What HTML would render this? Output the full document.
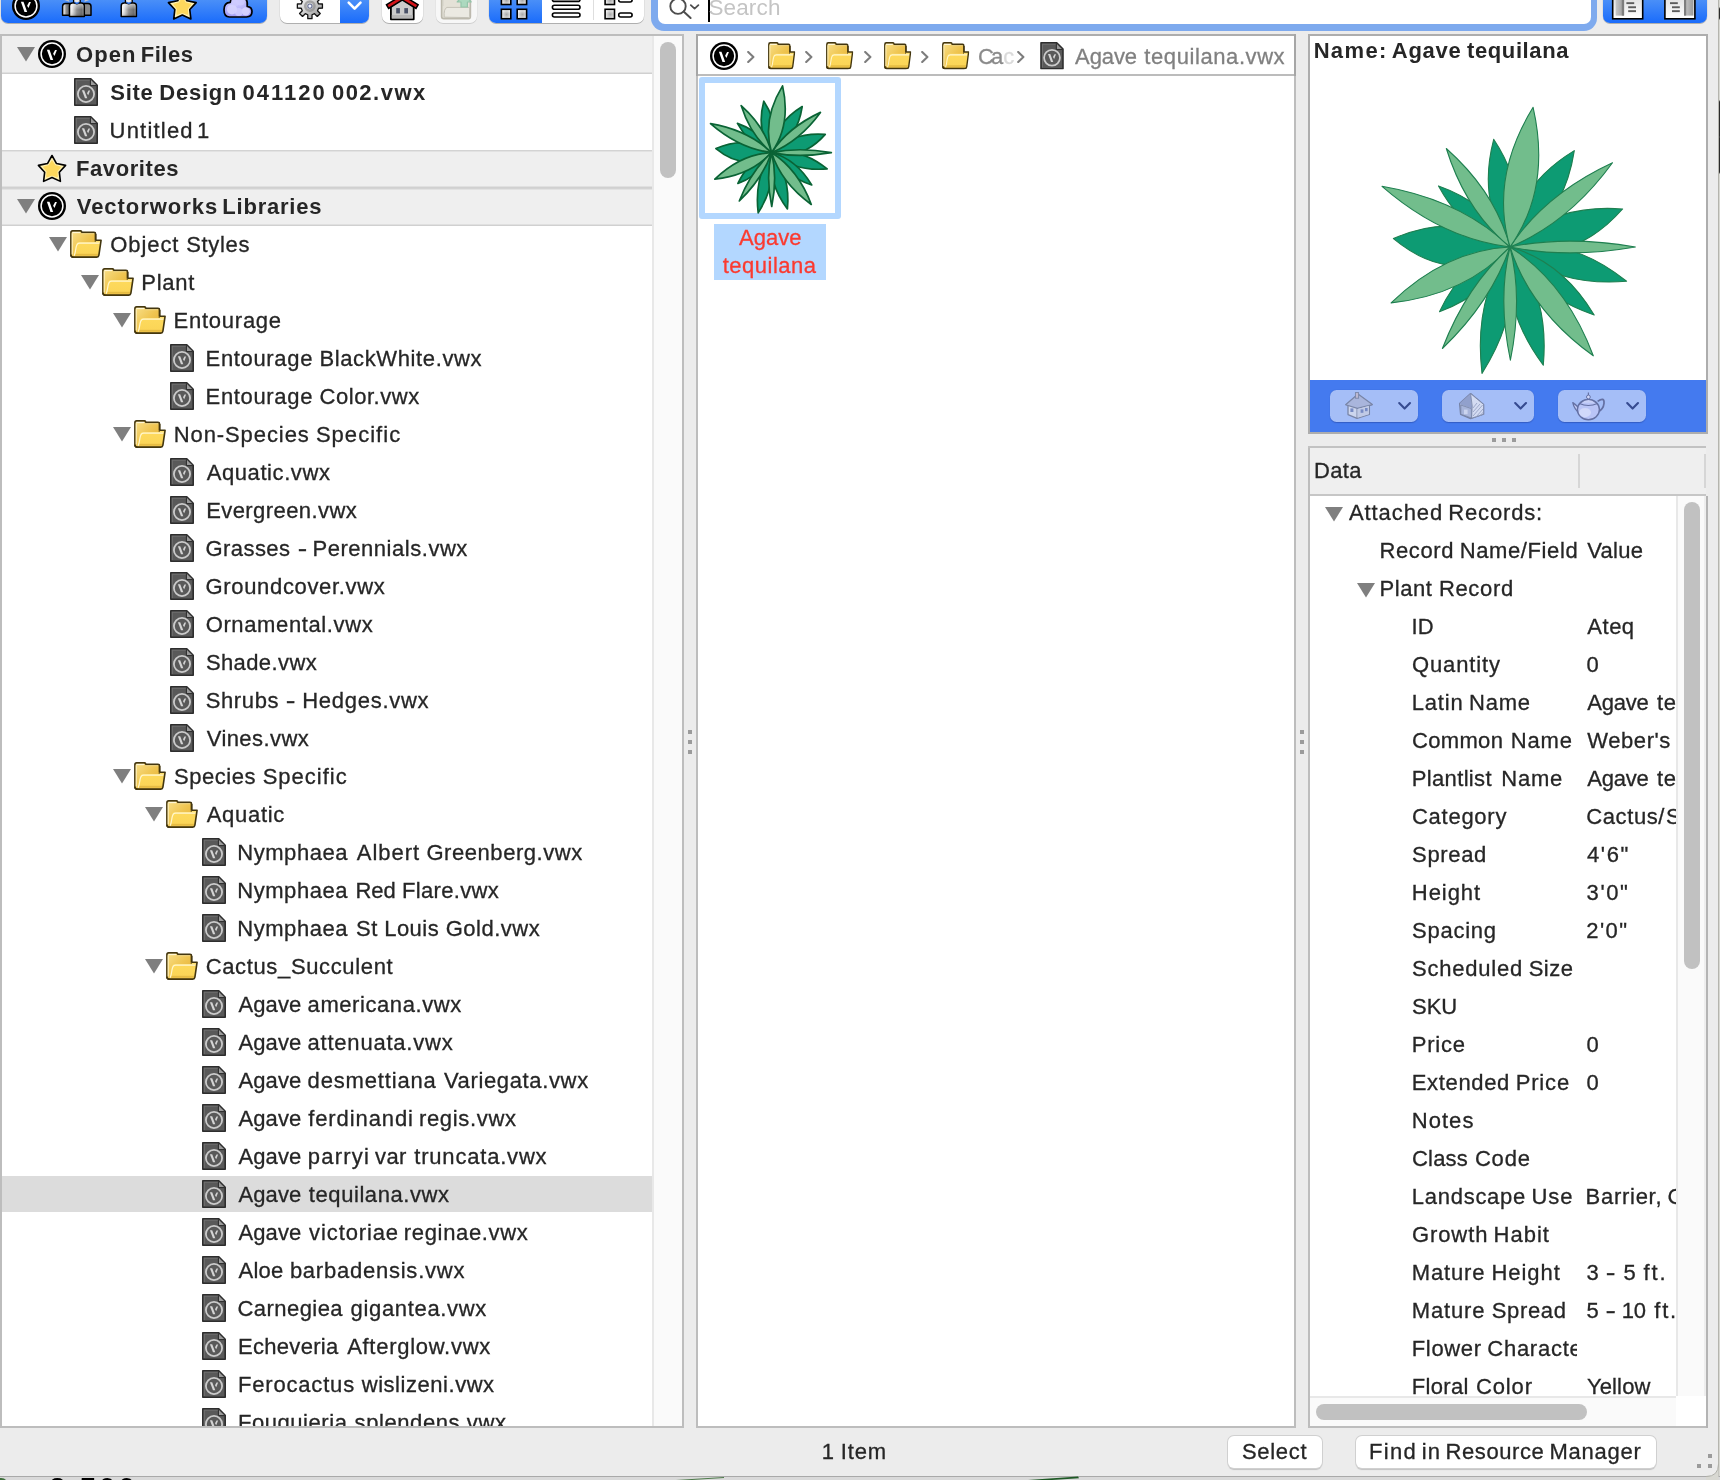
<!DOCTYPE html><html><head><meta charset="utf-8"><title>Resource Selector</title><style>
*{box-sizing:border-box;margin:0;padding:0}
html,body{width:1720px;height:1480px;overflow:hidden;background:#ececec}
body{position:relative;font-family:"Liberation Sans",sans-serif;font-size:22px;color:#262626}
.abs{position:absolute}
.t{position:absolute;white-space:pre;line-height:38px;height:38px;font-size:22px;-webkit-text-stroke:0.3px}
.b{font-weight:700}
svg{position:absolute;overflow:visible}
.hdr{position:absolute;left:2px;width:650px;height:38px;background:#efefef}
.ln{position:absolute;left:0;width:100%;height:1px}
</style></head><body>

<svg width="0" height="0" style="position:absolute">
<defs>
  <linearGradient id="gBlue" x1="0" y1="0" x2="0" y2="1">
    <stop offset="0" stop-color="#5a9af8"/><stop offset="1" stop-color="#1a6cfb"/>
  </linearGradient>
  <linearGradient id="gFolderBack" x1="0" y1="0" x2="1" y2="1">
    <stop offset="0" stop-color="#f9e08a"/><stop offset="0.5" stop-color="#efc551"/><stop offset="1" stop-color="#e3ae33"/>
  </linearGradient>
  <linearGradient id="gFolderFront" x1="0" y1="0" x2="0" y2="1">
    <stop offset="0" stop-color="#fde27a"/><stop offset="0.25" stop-color="#fdd95c"/><stop offset="0.8" stop-color="#fbd557"/><stop offset="1" stop-color="#e6bb43"/>
  </linearGradient>
  <linearGradient id="gBody" x1="0" y1="0" x2="1" y2="0">
    <stop offset="0" stop-color="#ffffff"/><stop offset="0.18" stop-color="#e8e8e8"/><stop offset="0.5" stop-color="#8e8e8e"/><stop offset="0.85" stop-color="#6a6a6a"/><stop offset="1" stop-color="#d0d0d0"/>
  </linearGradient>
  <linearGradient id="gBodyV" x1="0" y1="0" x2="0" y2="1">
    <stop offset="0" stop-color="#ffffff" stop-opacity="0.55"/><stop offset="0.5" stop-color="#ffffff" stop-opacity="0"/><stop offset="1" stop-color="#000" stop-opacity="0.15"/>
  </linearGradient>
  <radialGradient id="gSq" cx="0.55" cy="0.55" r="0.6">
    <stop offset="0" stop-color="#a8a8a8"/><stop offset="0.6" stop-color="#d8d8d8"/><stop offset="1" stop-color="#ffffff"/>
  </radialGradient>
  <linearGradient id="gGear" x1="0" y1="0" x2="1" y2="1">
    <stop offset="0" stop-color="#ffffff"/><stop offset="0.45" stop-color="#d6d6d6"/><stop offset="1" stop-color="#8e8e8e"/>
  </linearGradient>
  <linearGradient id="gSide" x1="0" y1="0" x2="1" y2="0">
    <stop offset="0" stop-color="#c8c8c8"/><stop offset="1" stop-color="#9a9a9a"/>
  </linearGradient>
  <linearGradient id="gPage" x1="0" y1="0" x2="0" y2="1">
    <stop offset="0" stop-color="#d9d9d9"/><stop offset="1" stop-color="#ffffff"/>
  </linearGradient>
  <radialGradient id="gCloud" cx="0.4" cy="0.3" r="0.8">
    <stop offset="0" stop-color="#cfcdff"/><stop offset="0.6" stop-color="#b3aff9"/><stop offset="1" stop-color="#9a94f2"/>
  </radialGradient>

  <!-- disclosure triangle 18x15 -->
  <symbol id="tri" viewBox="0 0 18 15"><path d="M0 0H18L9 14.6Z" fill="#7f7f7f"/></symbol>

  <!-- VW logo 28x28 -->
  <symbol id="vw" viewBox="0 0 28 28">
    <circle cx="14" cy="14" r="14" fill="#000"/>
    <circle cx="14" cy="14" r="10.9" fill="none" stroke="#fff" stroke-width="1.5"/>
    <path d="M8.9 9.8H11.5L15.2 19.9H12.5Z" fill="#fff"/>
    <path d="M17.1 9.9H18.9L16.5 15.9L15.1 13.7Z" fill="#fff"/>
  </symbol>

  <!-- file icon 24x28 -->
  <symbol id="file" viewBox="0 0 24 28">
    <path d="M0.8 0.8H16.8L23.2 7.2V27.2H0.8Z" fill="#595959" stroke="#2d2d2d" stroke-width="1.6" stroke-linejoin="round"/>
    <path d="M2.3 26V2.3H16" fill="none" stroke="#6e6e6e" stroke-width="1.1"/>
    <path d="M16.9 2V7.1H22Z" fill="#9a9a9a"/>
    <path d="M16.4 1.6V7.6H22.6" fill="none" stroke="#2d2d2d" stroke-width="1" stroke-linejoin="round"/>
    <circle cx="12" cy="16" r="8.1" fill="none" stroke="#cacaca" stroke-width="1.8"/>
    <path d="M7.9 12.3H10.2L13.3 20.3H11Z" fill="#d4d4d4"/>
    <path d="M14.5 12.4H16.1L14.2 17.2L13 15.3Z" fill="#d4d4d4"/>
  </symbol>

  <!-- open folder 32x28 -->
  <symbol id="folder" viewBox="0 0 32 28" preserveAspectRatio="none">
    <path d="M0.9 2.6Q0.9 0.9 2.6 0.9H10.6Q11.6 0.9 11.9 2.4H24Q25.6 2.4 25.6 4V27.1H3.2Q0.9 27.1 0.9 24.8Z" fill="url(#gFolderBack)" stroke="#43360f" stroke-width="1.6" stroke-linejoin="round"/>
    <path d="M2.2 3.2V24.6" stroke="#fff3c4" stroke-width="1.1" fill="none" opacity="0.95"/>
    <path d="M2.4 2.5H10.2" stroke="#fff7d6" stroke-width="1.3" fill="none"/>
    <path d="M11.6 3.7H24.2" stroke="#f9e39a" stroke-width="1" fill="none" opacity="0.8"/>
    <path d="M3.2 27.1C4.9 24.6 4.4 19 5.6 15.2Q6.4 12 9 12H25.6V10.2H31.1L28.9 25.2Q28.6 27.1 26.8 27.1Z" fill="url(#gFolderFront)"/>
    <path d="M5.2 24.6H28.4" stroke="#e0b63e" stroke-width="1.5" opacity="0.75" fill="none"/>
    <path d="M4.1 25.8C5.7 23 5.4 19 6.6 15.6Q7.3 13.1 9.6 13.1H29.6" stroke="#fff6cf" stroke-width="1.2" fill="none"/>
    <path d="M25.6 10.2H31.1L28.9 25.2Q28.6 27.1 26.8 27.1H3.2Q0.9 27.1 0.9 24.8" fill="none" stroke="#43360f" stroke-width="1.6" stroke-linejoin="round"/>
    <path d="M25.6 4V10.2" stroke="#43360f" stroke-width="1.6"/>
  </symbol>

  <!-- star 30x31.6 : center 15,15.8 R 14.3 -->
  <symbol id="star" viewBox="0 0 30 30">
    <path d="M15.00 1.50L19.53 9.57L28.60 11.38L22.32 18.18L23.41 27.37L15.00 23.50L6.59 27.37L7.68 18.18L1.40 11.38L10.47 9.57Z" fill="#fff1b0" stroke="#000" stroke-width="1.6" stroke-linejoin="round"/>
    <path d="M15.00 7.40L17.88 11.84L22.99 13.20L19.66 17.31L19.94 22.60L15.00 20.70L10.06 22.60L10.34 17.31L7.01 13.20L12.12 11.84Z" fill="#fdd85d" stroke="#fdd85d" stroke-width="1.6" stroke-linejoin="round"/>
  </symbol>

  <!-- chevron right (breadcrumb) 8x12 -->
  <symbol id="chevR" viewBox="0 0 8 12"><path d="M1.2 1L6.4 6L1.2 11" fill="none" stroke="#7d7d7d" stroke-width="2.1" stroke-linecap="round" stroke-linejoin="round"/></symbol>
</defs>
</svg>

<div id="root" style="position:absolute;left:0;top:0;width:1720px;height:1480px;will-change:transform">
<div class="abs" style="left:1px;top:-10px;width:266px;height:32.7px;border-radius:7px;background:linear-gradient(#5d9cf8 0%,#4a8ff8 30%,#1a6cfb 100%);box-shadow:0 1px 0.5px rgba(0,0,0,0.22), 0 0 0 0.5px rgba(0,0,0,0.10);"></div>
<svg style="left:12px;top:-8.5px" width="28" height="28"><use href="#vw" width="28" height="28"/></svg>
<svg style="left:60px;top:-12px" width="34" height="30" viewBox="60 -12 34 30">
      <g stroke="#000" stroke-width="1.5" stroke-linejoin="round">
        <path d="M62.6 15.2V6.5Q62.6 3.6 65.5 3.6H70V15.2Z" fill="url(#gBody)"/>
        <path d="M91 15.2V6.5Q91 3.6 88.1 3.6H83.6V15.2Z" fill="#8a8a8a"/>
        <path d="M69.5 16.4V6Q69.5 3 72.5 3H81.3Q84.3 3 84.3 6V16.4Z" fill="url(#gBody)"/>
      </g>
      <path d="M70.3 15.6V6Q70.3 3.8 72.5 3.8H81.3Q83.5 3.8 83.5 6V15.6Z" fill="url(#gBodyV)"/>
      <path d="M73.6 -3.5V2.2Q76.9 5.4 80.2 2.2V-3.5Z" fill="#e9e9e9" stroke="#000" stroke-width="1.3"/>
      <path d="M74.6 1.2Q76.9 4 79.2 1.2L79.2 3.1Q76.9 5 74.6 3.1Z" fill="#2a74f0"/>
      <path d="M64.5 0L67.5 -4L69.5 2Z" fill="#c9c9c9" opacity="0.9"/>
      <path d="M89.3 0L86.3 -4L84.3 2Z" fill="#c9c9c9" opacity="0.9"/>
    </svg>
<svg style="left:116px;top:-12px" width="26" height="30" viewBox="116 -12 26 30">
      <path d="M121.2 16.4V6Q121.2 3 124.2 3H133.4Q136.4 3 136.4 6V16.4Z" fill="url(#gBody)" stroke="#000" stroke-width="1.5" stroke-linejoin="round"/>
      <path d="M122 15.6V6Q122 3.8 124.2 3.8H133.4Q135.6 3.8 135.6 6V15.6Z" fill="url(#gBodyV)"/>
      <path d="M125.4 -3.5V2.2Q128.8 5.4 132.2 2.2V-3.5Z" fill="#e9e9e9" stroke="#000" stroke-width="1.3"/>
      <path d="M126.4 1.2Q128.8 4 131.2 1.2L131.2 3.1Q128.8 5 126.4 3.1Z" fill="#2a74f0"/>
    </svg>
<svg style="left:166.7px;top:-8.9px" width="30.6" height="30.6"><use href="#star" width="30.6" height="30.6"/></svg>
<svg style="left:220px;top:-12px" width="36" height="32" viewBox="220 -12 36 32">
      <path d="M229.5 17H246.5Q252 17 252 11.6Q252 6.8 247.2 6.6Q248.5 -4 238.6 -5Q231.5 -5 230.2 2.4Q224 2.6 224 9.8Q224 17 229.5 17Z" fill="url(#gCloud)" stroke="#000" stroke-width="1.7" stroke-linejoin="round"/>
      <circle cx="232" cy="9.4" r="5" fill="#d9d7ff" opacity="0.8"/>
      <circle cx="245.8" cy="11.4" r="4.2" fill="#d9d7ff" opacity="0.85"/>
      <circle cx="238.8" cy="12" r="3.9" fill="#d2cfff" opacity="0.8"/>
      <circle cx="240.4" cy="1" r="4.6" fill="#d0cdff" opacity="0.7"/><circle cx="235.4" cy="2.6" r="3.6" fill="#cfccff" opacity="0.6"/>
    </svg>
<div class="abs" style="left:279.5px;top:-10px;width:89.5px;height:32.7px;border-radius:7px;background:#fff;overflow:hidden;box-shadow:0 1px 0.5px rgba(0,0,0,0.22), 0 0 0 0.5px rgba(0,0,0,0.10);"><div class="abs" style="left:60.5px;top:0;width:29px;height:33px;background:linear-gradient(#5d9cf8 0%,#4a8ff8 30%,#1a6cfb 100%);"></div></div>
<svg style="left:295px;top:-10px" width="30" height="32" viewBox="295 -10 30 32">
      <g transform="translate(309.9 6.1)">
        <path d="M8.64 -2.15L12.53 -2.09L12.53 2.09L8.64 2.15L7.62 4.59L10.33 7.38L7.38 10.33L4.59 7.62L2.15 8.64L2.09 12.53L-2.09 12.53L-2.15 8.64L-4.59 7.62L-7.38 10.33L-10.33 7.38L-7.62 4.59L-8.64 2.15L-12.53 2.09L-12.53 -2.09L-8.64 -2.15L-7.62 -4.59L-10.33 -7.38L-7.38 -10.33L-4.59 -7.62L-2.15 -8.64L-2.09 -12.53L2.09 -12.53L2.15 -8.64L4.59 -7.62L7.38 -10.33L10.33 -7.38L7.62 -4.59Z" fill="url(#gGear)" stroke="#111" stroke-width="1.3" stroke-linejoin="round"/>
        <circle r="4.6" fill="none" stroke="#8d8d8d" stroke-width="2.6" opacity="0.7"/>
        <circle r="2.1" fill="#f4f6ff" stroke="#6b7396" stroke-width="1.1"/>
      </g>
    </svg>
<svg style="left:346px;top:0px" width="17" height="12" viewBox="346 0 17 12"><path d="M348.7 2.6L354.6 8.6L360.5 2.6" fill="none" stroke="#fff" stroke-width="2.6" stroke-linecap="round" stroke-linejoin="round"/></svg>
<div class="abs" style="left:381.5px;top:-10px;width:41px;height:32.7px;border-radius:7px;background:#fff;box-shadow:0 1px 0.5px rgba(0,0,0,0.22), 0 0 0 0.5px rgba(0,0,0,0.10);"></div>
<svg style="left:383px;top:-12px" width="38" height="33" viewBox="383 -12 38 33">
      <path d="M390.9 6.5V19.3H413.7V6.5L402.3 -1.5Z" fill="#cbcbcb" stroke="#000" stroke-width="1.8" stroke-linejoin="round"/>
      <path d="M391.8 18.4H412.8V15H391.8Z" fill="#b6b6b6"/>
      <path d="M386.9 7L402.3 -2.4L417.7 7" fill="none" stroke="#000" stroke-width="5.6" stroke-linejoin="miter"/>
      <path d="M388.2 6.2L402.3 -2.4L416.4 6.2" fill="none" stroke="#d4151b" stroke-width="2.6" stroke-linejoin="miter"/>
      <rect x="396.2" y="8.1" width="3.7" height="5.3" fill="#4a5268"/>
      <rect x="404.3" y="8.1" width="3.7" height="5.3" fill="#4a5268"/>
    </svg>
<div class="abs" style="left:435.5px;top:-10px;width:41px;height:32.7px;border-radius:7px;background:#f7f7f7;box-shadow:0 1px 0.5px rgba(0,0,0,0.10), 0 0 0 0.5px rgba(0,0,0,0.06)"></div>
<svg style="left:437px;top:-12px" width="38" height="33" viewBox="437 -12 38 33" opacity="0.95">
      <path d="M441.6 -8V16.4Q441.6 18.6 443.8 18.6H468.4Q470.4 18.6 470.4 16.4V-8Z" fill="#e3e0d6" stroke="#b9b6aa" stroke-width="1.6"/>
      <path d="M444.2 17.2Q443.6 8.6 447 7.4H469.6V16.4Q469.6 17.6 468.4 17.6Z" fill="#ebe9e1" stroke="#c3c0b5" stroke-width="1"/>
      <path d="M442.8 -8V6" stroke="#d0cdc2" stroke-width="1.2"/>
      <path d="M461 7V2H457.2L464.2 -6L471.2 2H467.4V7Z" fill="#a9d8bd" stroke="#8fc3a6" stroke-width="1.2" stroke-linejoin="round"/>
    </svg>
<div class="abs" style="left:489px;top:-10px;width:155px;height:32.7px;border-radius:7px;background:#fff;overflow:hidden;box-shadow:0 1px 0.5px rgba(0,0,0,0.22), 0 0 0 0.5px rgba(0,0,0,0.10);"><div class="abs" style="left:0;top:0;width:53px;height:33px;background:linear-gradient(#5d9cf8 0%,#4a8ff8 30%,#1a6cfb 100%);"></div><div class="abs" style="left:103.5px;top:0;width:1.5px;height:30px;background:#dedede"></div></div>
<svg style="left:495px;top:-12px" width="150" height="34" viewBox="495 -12 150 34"><rect x="501.4" y="-4.9" width="9.4" height="9.4" fill="url(#gSq)" stroke="#000" stroke-width="1.6"/><rect x="517.2" y="-4.9" width="9.4" height="9.4" fill="url(#gSq)" stroke="#000" stroke-width="1.6"/><rect x="501.4" y="9.3" width="9.4" height="9.4" fill="url(#gSq)" stroke="#000" stroke-width="1.6"/><rect x="517.2" y="9.3" width="9.4" height="9.4" fill="url(#gSq)" stroke="#000" stroke-width="1.6"/><rect x="552.4" y="-2.6" width="27.6" height="4" rx="2" fill="#fff" stroke="#000" stroke-width="1.6"/><rect x="552.4" y="5.2" width="27.6" height="4" rx="2" fill="#fff" stroke="#000" stroke-width="1.6"/><rect x="552.4" y="13" width="27.6" height="4" rx="2" fill="#fff" stroke="#000" stroke-width="1.6"/><rect x="605.1" y="-4.9" width="9.4" height="9.4" fill="url(#gSq)" stroke="#000" stroke-width="1.6"/><rect x="605.1" y="9.3" width="9.4" height="9.4" fill="url(#gSq)" stroke="#000" stroke-width="1.6"/><rect x="618.7" y="-2" width="13.4" height="4" rx="2" fill="#fff" stroke="#000" stroke-width="1.6"/><rect x="618.7" y="13" width="13.4" height="4" rx="2" fill="#fff" stroke="#000" stroke-width="1.6"/></svg>
<div class="abs" style="left:651px;top:-20px;width:946px;height:50.6px;border-radius:13px;background:#7eaaee"></div>
<div class="abs" style="left:657.5px;top:-20px;width:933px;height:43.6px;border-radius:7px;background:#fff"></div>
<svg style="left:666px;top:-6px" width="36" height="28" viewBox="666 -6 36 28">
      <circle cx="678" cy="6.2" r="7.7" fill="none" stroke="#4d4d4d" stroke-width="1.9"/>
      <path d="M683.6 11.6L690.6 18" stroke="#4d4d4d" stroke-width="2" stroke-linecap="round"/>
      <path d="M690.8 5.2L694.6 8.6L698.4 5.2" fill="none" stroke="#4d4d4d" stroke-width="1.8" stroke-linecap="round" stroke-linejoin="round"/>
    </svg>
<div class="abs" style="left:708px;top:-6px;width:2px;height:28px;background:#000"></div>
<span class="t" style="left:708.4px;top:-11px;color:#c4c4c4;font-size:22.5px;letter-spacing:0.15px;-webkit-text-stroke:0">Search</span>
<div class="abs" style="left:1603px;top:-10px;width:104px;height:32.7px;border-radius:7px;background:linear-gradient(#5d9cf8 0%,#4a8ff8 30%,#1a6cfb 100%);box-shadow:0 1px 0.5px rgba(0,0,0,0.22), 0 0 0 0.5px rgba(0,0,0,0.10);"></div>
<svg style="left:1608px;top:-12px" width="94" height="34" viewBox="1608 -12 94 34"><rect x="1612.7" y="-8" width="30" height="26.8" fill="url(#gPage)" stroke="#000" stroke-width="1.6"/><rect x="1615.6" y="-8" width="8.6" height="23.6" fill="url(#gSide)"/><rect x="1621.8" y="-8" width="2.2" height="23.6" fill="#7d7d7d"/><rect x="1626.4" y="2.2" width="7.8" height="1.9" fill="#5c5c5c"/><rect x="1628.2" y="6.3" width="7.8" height="1.9" fill="#5c5c5c"/><rect x="1628.2" y="10.2" width="7.8" height="1.9" fill="#5c5c5c"/><rect x="1664.9" y="-8" width="30" height="26.8" fill="url(#gPage)" stroke="#000" stroke-width="1.6"/><rect x="1684" y="-8" width="9.4" height="23.6" fill="url(#gSide)"/><rect x="1684" y="-8" width="2.2" height="23.6" fill="#7d7d7d"/><rect x="1670" y="2.2" width="7.8" height="1.9" fill="#5c5c5c"/><rect x="1672" y="6.3" width="7.8" height="1.9" fill="#5c5c5c"/><rect x="1672" y="10.2" width="7.8" height="1.9" fill="#5c5c5c"/></svg>
<div class="abs" style="left:0;top:34px;width:684px;height:1394px;background:#fff;border:2px solid #bdbdbd;"></div>
<div class="abs" style="left:652px;top:36px;width:30px;height:1390px;background:#fafafa;border-left:2px solid #e8e8e8"></div>
<div class="abs" style="left:660px;top:42px;width:16px;height:136px;border-radius:8px;background:#c1c1c1"></div>
<div class="hdr" style="top:36px"><div class="ln" style="top:36px;background:#e0e0e0"></div><div class="ln" style="top:37px;background:#d0d0d0"></div></div>
<div class="hdr" style="top:150px"><div class="ln" style="top:0;background:#d3d3d3"></div><div class="ln" style="top:1px;background:#e2e2e2"></div><div class="ln" style="top:36px;background:#e0e0e0"></div><div class="ln" style="top:37px;background:#d0d0d0"></div></div>
<div class="hdr" style="top:188px"><div class="ln" style="top:0;background:#d3d3d3"></div><div class="ln" style="top:1px;background:#e2e2e2"></div><div class="ln" style="top:36px;background:#e0e0e0"></div><div class="ln" style="top:37px;background:#d0d0d0"></div></div>
<div class="abs" style="left:2px;top:1176px;width:650px;height:36px;background:#dcdcdc"></div>
<div class="abs" style="left:0;top:0;width:652px;height:1426px;overflow:hidden">
<svg style="left:17px;top:47px" width="18" height="15" ><use href="#tri" width="18" height="15"/></svg>
<svg style="left:38px;top:40px" width="28" height="28" ><use href="#vw" width="28" height="28"/></svg>
<svg style="left:74px;top:78px" width="24" height="28" ><use href="#file" width="24" height="28"/></svg>
<svg style="left:74px;top:116px" width="24" height="28" ><use href="#file" width="24" height="28"/></svg>
<svg style="left:36.9px;top:153.5px" width="30" height="30" ><use href="#star" width="30" height="30"/></svg>
<svg style="left:17px;top:199px" width="18" height="15" ><use href="#tri" width="18" height="15"/></svg>
<svg style="left:38px;top:192px" width="28" height="28" ><use href="#vw" width="28" height="28"/></svg>
<svg style="left:49px;top:237px" width="18" height="15" ><use href="#tri" width="18" height="15"/></svg>
<svg style="left:70px;top:230px" width="32" height="28" ><use href="#folder" width="32" height="28"/></svg>
<svg style="left:81px;top:275px" width="18" height="15" ><use href="#tri" width="18" height="15"/></svg>
<svg style="left:102px;top:268px" width="32" height="28" ><use href="#folder" width="32" height="28"/></svg>
<svg style="left:113px;top:313px" width="18" height="15" ><use href="#tri" width="18" height="15"/></svg>
<svg style="left:134px;top:306px" width="32" height="28" ><use href="#folder" width="32" height="28"/></svg>
<svg style="left:170px;top:344px" width="24" height="28" ><use href="#file" width="24" height="28"/></svg>
<svg style="left:170px;top:382px" width="24" height="28" ><use href="#file" width="24" height="28"/></svg>
<svg style="left:113px;top:427px" width="18" height="15" ><use href="#tri" width="18" height="15"/></svg>
<svg style="left:134px;top:420px" width="32" height="28" ><use href="#folder" width="32" height="28"/></svg>
<svg style="left:170px;top:458px" width="24" height="28" ><use href="#file" width="24" height="28"/></svg>
<svg style="left:170px;top:496px" width="24" height="28" ><use href="#file" width="24" height="28"/></svg>
<svg style="left:170px;top:534px" width="24" height="28" ><use href="#file" width="24" height="28"/></svg>
<svg style="left:170px;top:572px" width="24" height="28" ><use href="#file" width="24" height="28"/></svg>
<svg style="left:170px;top:610px" width="24" height="28" ><use href="#file" width="24" height="28"/></svg>
<svg style="left:170px;top:648px" width="24" height="28" ><use href="#file" width="24" height="28"/></svg>
<svg style="left:170px;top:686px" width="24" height="28" ><use href="#file" width="24" height="28"/></svg>
<svg style="left:170px;top:724px" width="24" height="28" ><use href="#file" width="24" height="28"/></svg>
<svg style="left:113px;top:769px" width="18" height="15" ><use href="#tri" width="18" height="15"/></svg>
<svg style="left:134px;top:762px" width="32" height="28" ><use href="#folder" width="32" height="28"/></svg>
<svg style="left:145px;top:807px" width="18" height="15" ><use href="#tri" width="18" height="15"/></svg>
<svg style="left:166px;top:800px" width="32" height="28" ><use href="#folder" width="32" height="28"/></svg>
<svg style="left:202px;top:838px" width="24" height="28" ><use href="#file" width="24" height="28"/></svg>
<svg style="left:202px;top:876px" width="24" height="28" ><use href="#file" width="24" height="28"/></svg>
<svg style="left:202px;top:914px" width="24" height="28" ><use href="#file" width="24" height="28"/></svg>
<svg style="left:145px;top:959px" width="18" height="15" ><use href="#tri" width="18" height="15"/></svg>
<svg style="left:166px;top:952px" width="32" height="28" ><use href="#folder" width="32" height="28"/></svg>
<svg style="left:202px;top:990px" width="24" height="28" ><use href="#file" width="24" height="28"/></svg>
<svg style="left:202px;top:1028px" width="24" height="28" ><use href="#file" width="24" height="28"/></svg>
<svg style="left:202px;top:1066px" width="24" height="28" ><use href="#file" width="24" height="28"/></svg>
<svg style="left:202px;top:1104px" width="24" height="28" ><use href="#file" width="24" height="28"/></svg>
<svg style="left:202px;top:1142px" width="24" height="28" ><use href="#file" width="24" height="28"/></svg>
<svg style="left:202px;top:1180px" width="24" height="28" ><use href="#file" width="24" height="28"/></svg>
<svg style="left:202px;top:1218px" width="24" height="28" ><use href="#file" width="24" height="28"/></svg>
<svg style="left:202px;top:1256px" width="24" height="28" ><use href="#file" width="24" height="28"/></svg>
<svg style="left:202px;top:1294px" width="24" height="28" ><use href="#file" width="24" height="28"/></svg>
<svg style="left:202px;top:1332px" width="24" height="28" ><use href="#file" width="24" height="28"/></svg>
<svg style="left:202px;top:1370px" width="24" height="28" ><use href="#file" width="24" height="28"/></svg>
<svg style="left:202px;top:1408px" width="24" height="28" ><use href="#file" width="24" height="28"/></svg>
<span class="t" style="left:76.00px;top:36px;letter-spacing:1.077px;font-weight:700;-webkit-text-stroke:0;">Open</span>
<span class="t" style="left:140.63px;top:36px;letter-spacing:0.583px;font-weight:700;-webkit-text-stroke:0;">Files</span>
<span class="t" style="left:110.27px;top:74px;letter-spacing:0.729px;word-spacing:-1.0px;font-weight:700;-webkit-text-stroke:0;">Site Design</span>
<span class="t" style="left:242.43px;top:74px;letter-spacing:2.034px;font-weight:700;-webkit-text-stroke:0;">041120</span>
<span class="t" style="left:331.93px;top:74px;letter-spacing:1.488px;font-weight:700;-webkit-text-stroke:0;">002.vwx</span>
<span class="t" style="left:109.60px;top:112px;letter-spacing:1.203px;">Untitled</span>
<span class="t" style="left:196.92px;top:112px;letter-spacing:-0.700px;">1</span>
<span class="t" style="left:76.03px;top:150px;letter-spacing:0.581px;font-weight:700;-webkit-text-stroke:0;">Favorites</span>
<span class="t" style="left:76.75px;top:188px;letter-spacing:0.961px;font-weight:700;-webkit-text-stroke:0;">Vectorworks</span>
<span class="t" style="left:222.33px;top:188px;letter-spacing:0.780px;font-weight:700;-webkit-text-stroke:0;">Libraries</span>
<span class="t" style="left:110.26px;top:226px;letter-spacing:0.922px;">Object</span>
<span class="t" style="left:186.20px;top:226px;letter-spacing:0.674px;">Styles</span>
<span class="t" style="left:141.30px;top:264px;letter-spacing:0.702px;">Plant</span>
<span class="t" style="left:173.60px;top:302px;letter-spacing:0.744px;">Entourage</span>
<span class="t" style="left:205.60px;top:340px;letter-spacing:0.656px;">Entourage</span>
<span class="t" style="left:319.40px;top:340px;letter-spacing:0.623px;">BlackWhite.vwx</span>
<span class="t" style="left:205.60px;top:378px;letter-spacing:0.656px;">Entourage</span>
<span class="t" style="left:319.58px;top:378px;letter-spacing:0.537px;">Color.vwx</span>
<span class="t" style="left:173.70px;top:416px;letter-spacing:0.915px;">Non-Species</span>
<span class="t" style="left:315.90px;top:416px;letter-spacing:1.033px;">Specific</span>
<span class="t" style="left:206.66px;top:454px;letter-spacing:0.589px;">Aquatic.vwx</span>
<span class="t" style="left:206.20px;top:492px;letter-spacing:0.419px;">Evergreen.vwx</span>
<span class="t" style="left:205.59px;top:530px;letter-spacing:0.413px;">Grasses</span>
<span class="t" style="left:297.82px;top:530px;letter-spacing:1.227px;transform:scaleX(1.284);transform-origin:0.98px 50%;">-</span>
<span class="t" style="left:312.50px;top:530px;letter-spacing:0.530px;">Perennials.vwx</span>
<span class="t" style="left:205.59px;top:568px;letter-spacing:0.655px;">Groundcover.vwx</span>
<span class="t" style="left:205.66px;top:606px;letter-spacing:0.625px;">Ornamental.vwx</span>
<span class="t" style="left:205.90px;top:644px;letter-spacing:0.401px;">Shade.vwx</span>
<span class="t" style="left:205.70px;top:682px;letter-spacing:0.635px;">Shrubs</span>
<span class="t" style="left:286.42px;top:682px;letter-spacing:1.427px;transform:scaleX(1.321);transform-origin:0.98px 50%;">-</span>
<span class="t" style="left:302.20px;top:682px;letter-spacing:0.733px;">Hedges.vwx</span>
<span class="t" style="left:206.70px;top:720px;letter-spacing:0.424px;">Vines.vwx</span>
<span class="t" style="left:173.90px;top:758px;letter-spacing:0.569px;">Species</span>
<span class="t" style="left:262.70px;top:758px;letter-spacing:1.005px;">Specific</span>
<span class="t" style="left:206.76px;top:796px;letter-spacing:0.689px;">Aquatic</span>
<span class="t" style="left:237.20px;top:834px;letter-spacing:0.573px;">Nymphaea</span>
<span class="t" style="left:356.86px;top:834px;letter-spacing:0.964px;">Albert</span>
<span class="t" style="left:426.39px;top:834px;letter-spacing:0.563px;">Greenberg.vwx</span>
<span class="t" style="left:237.20px;top:872px;letter-spacing:0.573px;">Nymphaea</span>
<span class="t" style="left:355.50px;top:872px;letter-spacing:-0.068px;">Red</span>
<span class="t" style="left:402.00px;top:872px;letter-spacing:0.340px;">Flare.vwx</span>
<span class="t" style="left:237.20px;top:910px;letter-spacing:0.573px;">Nymphaea</span>
<span class="t" style="left:355.90px;top:910px;letter-spacing:0.563px;">St</span>
<span class="t" style="left:384.20px;top:910px;letter-spacing:0.476px;">Louis</span>
<span class="t" style="left:445.69px;top:910px;letter-spacing:0.508px;">Gold.vwx</span>
<span class="t" style="left:205.68px;top:948px;letter-spacing:0.643px;">Cactus_Succulent</span>
<span class="t" style="left:238.56px;top:986px;letter-spacing:0.082px;">Agave</span>
<span class="t" style="left:307.57px;top:986px;letter-spacing:0.579px;">americana.vwx</span>
<span class="t" style="left:238.56px;top:1024px;letter-spacing:0.082px;">Agave</span>
<span class="t" style="left:307.57px;top:1024px;letter-spacing:0.777px;">attenuata.vwx</span>
<span class="t" style="left:238.56px;top:1062px;letter-spacing:0.082px;">Agave</span>
<span class="t" style="left:307.58px;top:1062px;letter-spacing:0.836px;">desmettiana</span>
<span class="t" style="left:443.90px;top:1062px;letter-spacing:0.641px;">Variegata.vwx</span>
<span class="t" style="left:238.56px;top:1100px;letter-spacing:0.082px;">Agave</span>
<span class="t" style="left:308.19px;top:1100px;letter-spacing:0.906px;">ferdinandi</span>
<span class="t" style="left:418.94px;top:1100px;letter-spacing:0.676px;">regis.vwx</span>
<span class="t" style="left:238.56px;top:1138px;letter-spacing:0.082px;">Agave</span>
<span class="t" style="left:307.78px;top:1138px;letter-spacing:1.217px;">parryi</span>
<span class="t" style="left:375.12px;top:1138px;letter-spacing:0.389px;">var</span>
<span class="t" style="left:414.27px;top:1138px;letter-spacing:0.806px;">truncata.vwx</span>
<span class="t" style="left:238.56px;top:1176px;letter-spacing:0.082px;">Agave</span>
<span class="t" style="left:308.87px;top:1176px;letter-spacing:0.563px;">tequilana.vwx</span>
<span class="t" style="left:238.56px;top:1214px;letter-spacing:0.082px;">Agave</span>
<span class="t" style="left:309.12px;top:1214px;letter-spacing:0.879px;">victoriae</span>
<span class="t" style="left:403.84px;top:1214px;letter-spacing:0.661px;">reginae.vwx</span>
<span class="t" style="left:238.56px;top:1252px;letter-spacing:0.258px;">Aloe</span>
<span class="t" style="left:289.88px;top:1252px;letter-spacing:0.763px;">barbadensis.vwx</span>
<span class="t" style="left:237.48px;top:1290px;letter-spacing:0.450px;">Carnegiea</span>
<span class="t" style="left:350.58px;top:1290px;letter-spacing:0.667px;">gigantea.vwx</span>
<span class="t" style="left:237.90px;top:1328px;letter-spacing:0.320px;">Echeveria</span>
<span class="t" style="left:347.16px;top:1328px;letter-spacing:0.715px;">Afterglow.vwx</span>
<span class="t" style="left:237.90px;top:1366px;letter-spacing:0.830px;">Ferocactus</span>
<span class="t" style="left:361.73px;top:1366px;letter-spacing:0.540px;">wislizeni.vwx</span>
<span class="t" style="left:237.90px;top:1404px;letter-spacing:0.561px;">Fouquieria</span>
<span class="t" style="left:354.59px;top:1404px;letter-spacing:0.586px;">splendens.vwx</span>
</div>
<div class="abs" style="left:688px;top:730px;width:4px;height:4px;background:#9b9b9b"></div>
<div class="abs" style="left:1300px;top:730px;width:4px;height:4px;background:#9b9b9b"></div>
<div class="abs" style="left:688px;top:740px;width:4px;height:4px;background:#9b9b9b"></div>
<div class="abs" style="left:1300px;top:740px;width:4px;height:4px;background:#9b9b9b"></div>
<div class="abs" style="left:688px;top:750px;width:4px;height:4px;background:#9b9b9b"></div>
<div class="abs" style="left:1300px;top:750px;width:4px;height:4px;background:#9b9b9b"></div>
<div class="abs" style="left:696px;top:34px;width:600px;height:1394px;background:#fff;border:2px solid #bdbdbd;border-top-color:#adadad"></div>
<div class="abs" style="left:698px;top:74px;width:596px;height:2px;background:#bcbcbc"></div>
<div class="abs" style="left:696px;top:34px;width:2px;height:42px;background:#a6a6a6"></div><div class="abs" style="left:1294px;top:34px;width:2px;height:42px;background:#a6a6a6"></div>
<svg style="left:710px;top:42px" width="28" height="28" ><use href="#vw" width="28" height="28"/></svg>
<svg style="left:747.3px;top:50.8px" width="8" height="12" ><use href="#chevR" width="8" height="12"/></svg>
<svg style="left:805.3px;top:50.8px" width="8" height="12" ><use href="#chevR" width="8" height="12"/></svg>
<svg style="left:863.5px;top:50.8px" width="8" height="12" ><use href="#chevR" width="8" height="12"/></svg>
<svg style="left:921.3px;top:50.8px" width="8" height="12" ><use href="#chevR" width="8" height="12"/></svg>
<svg style="left:1017.2px;top:50.8px" width="8" height="12" ><use href="#chevR" width="8" height="12"/></svg>
<svg style="left:768px;top:42px" width="27.4" height="27.4" ><use href="#folder" width="27.4" height="27.4"/></svg>
<svg style="left:826px;top:42px" width="27.4" height="27.4" ><use href="#folder" width="27.4" height="27.4"/></svg>
<svg style="left:884px;top:42px" width="27.4" height="27.4" ><use href="#folder" width="27.4" height="27.4"/></svg>
<svg style="left:942px;top:42px" width="27.4" height="27.4" ><use href="#folder" width="27.4" height="27.4"/></svg>
<svg style="left:1040px;top:42px" width="24" height="27.5" ><use href="#file" width="24" height="27.5"/></svg>
<span class="t" style="left:977.88px;top:38px;letter-spacing:-2.808px;color:#8a8a8a;">Ca</span>
<span class="t" style="left:1003.27px;top:38px;letter-spacing:0.750px;color:#dadada;">c</span>
<span class="t" style="left:1075.06px;top:38px;letter-spacing:-0.093px;color:#808080;">Agave</span>
<span class="t" style="left:1144.37px;top:38px;letter-spacing:0.580px;color:#808080;">tequilana.vwx</span>
<div class="abs" style="left:699px;top:77px;width:142px;height:142px;background:#b3d7ff;border-radius:3px"></div>
<div class="abs" style="left:705px;top:83px;width:130px;height:130px;background:#fff"></div>
<svg style="left:700.25px;top:81.45px" width="143.10" height="143.10" viewBox="-150 -150 300 300"><g stroke="#0a6335" stroke-width="3.56" stroke-linejoin="round" style="filter:blur(0.4px)"><path d="M0 0C15.1 -40.8 4.3 -76.7 -16.3 -107.7C-25.6 -72.1 -25.0 -34.8 0 0Z" fill="#0d9b73"/><path d="M0 0C41.2 -21.3 58.3 -57.2 64.3 -96.4C30.4 -75.8 3.8 -46.2 0 0Z" fill="#0d9b73"/><path d="M0 0C48.5 13.7 84.5 -6.1 112.6 -38.0C72.7 -41.1 32.7 -33.2 0 0Z" fill="#0d9b73"/><path d="M0 0C35.3 30.7 76.3 37.6 116.6 34.3C84.9 8.6 46.7 -8.1 0 0Z" fill="#0d9b73"/><path d="M0 0C19.1 36.6 50.4 56.5 84.2 68.0C65.8 37.3 39.8 11.0 0 0Z" fill="#0d9b73"/><path d="M0 0C-7.1 46.7 9.0 85.5 33.3 118.2C37.0 77.6 30.4 36.1 0 0Z" fill="#0d9b73"/><path d="M0 0C-28.1 40.2 -33.0 84.2 -28.0 126.4C-5.1 90.4 9.2 48.5 0 0Z" fill="#0d9b73"/><path d="M0 0C-35.8 10.5 -57.0 35.6 -70.5 64.7C-40.3 53.7 -13.5 34.8 0 0Z" fill="#0d9b73"/><path d="M0 0C-39.0 -28.4 -79.1 -24.8 -116.6 -8.4C-82.3 19.9 -43.3 31.5 0 0Z" fill="#0d9b73"/><path d="M0 0C-15.3 -32.8 -42.1 -50.7 -71.5 -61.1C-56.6 -33.6 -34.8 -10.0 0 0Z" fill="#0d9b73"/><path d="M0 0C-37.7 -36.2 -83.0 -53.0 -128.0 -60.7C-93.6 -30.8 -51.9 -6.3 0 0Z" fill="#72bd8c"/><path d="M0 0C-11.0 -41.8 -35.5 -73.4 -63.7 -98.5C-52.4 -62.5 -33.6 -27.1 0 0Z" fill="#72bd8c"/><path d="M0 0C44.9 -18.5 77.5 -49.9 102.5 -84.2C64.0 -66.3 26.8 -40.5 0 0Z" fill="#72bd8c"/><path d="M0 0C31.8 -45.0 33.6 -93.5 23.1 -139.7C-1.7 -99.3 -15.6 -52.8 0 0Z" fill="#72bd8c"/><path d="M0 0C43.9 9.0 86.5 6.7 125.4 0.0C86.5 -6.7 43.9 -9.0 0 0Z" fill="#72bd8c"/><path d="M0 0C-49.6 2.6 -88.0 25.9 -118.9 55.9C-76.1 51.2 -33.6 36.5 0 0Z" fill="#72bd8c"/><path d="M0 0C-33.0 29.3 -53.6 65.4 -67.6 101.5C-39.7 74.7 -14.3 41.8 0 0Z" fill="#72bd8c"/><path d="M0 0C15.5 48.6 47.3 82.9 83.3 108.8C67.7 67.2 42.9 27.6 0 0Z" fill="#72bd8c"/><path d="M0 0C-9.6 39.6 -7.0 78.1 0.4 113.1C7.6 78.0 9.9 39.6 0 0Z" fill="#72bd8c"/></g></svg>
<div class="abs" style="left:714px;top:224px;width:112px;height:56px;background:#b3d7ff"></div>
<span class="t" style="left:738.96px;top:219px;letter-spacing:0.032px;color:#fb3a30;">Agave</span>
<span class="t" style="left:722.67px;top:247px;letter-spacing:0.515px;color:#fb3a30;">tequilana</span>
<div class="abs" style="left:1308px;top:34px;width:400px;height:400px;background:#fff;border:2px solid #adadad"></div>
<span class="t" style="left:1313.63px;top:32px;letter-spacing:1.359px;font-weight:700;-webkit-text-stroke:0;">Name:</span>
<span class="t" style="left:1391.75px;top:32px;letter-spacing:0.738px;font-weight:700;-webkit-text-stroke:0;">Agave</span>
<span class="t" style="left:1467.03px;top:32px;letter-spacing:0.606px;font-weight:700;-webkit-text-stroke:0;">tequilana</span>
<svg style="left:1360.10px;top:96.80px" width="300.00" height="300.00" viewBox="-150 -150 300 300"><g stroke="#1f7f50" stroke-width="1.10" stroke-linejoin="round" style="filter:blur(0.3px)"><path d="M0 0C15.1 -40.8 4.3 -76.7 -16.3 -107.7C-25.6 -72.1 -25.0 -34.8 0 0Z" fill="#0d9b73"/><path d="M0 0C41.2 -21.3 58.3 -57.2 64.3 -96.4C30.4 -75.8 3.8 -46.2 0 0Z" fill="#0d9b73"/><path d="M0 0C48.5 13.7 84.5 -6.1 112.6 -38.0C72.7 -41.1 32.7 -33.2 0 0Z" fill="#0d9b73"/><path d="M0 0C35.3 30.7 76.3 37.6 116.6 34.3C84.9 8.6 46.7 -8.1 0 0Z" fill="#0d9b73"/><path d="M0 0C19.1 36.6 50.4 56.5 84.2 68.0C65.8 37.3 39.8 11.0 0 0Z" fill="#0d9b73"/><path d="M0 0C-7.1 46.7 9.0 85.5 33.3 118.2C37.0 77.6 30.4 36.1 0 0Z" fill="#0d9b73"/><path d="M0 0C-28.1 40.2 -33.0 84.2 -28.0 126.4C-5.1 90.4 9.2 48.5 0 0Z" fill="#0d9b73"/><path d="M0 0C-35.8 10.5 -57.0 35.6 -70.5 64.7C-40.3 53.7 -13.5 34.8 0 0Z" fill="#0d9b73"/><path d="M0 0C-39.0 -28.4 -79.1 -24.8 -116.6 -8.4C-82.3 19.9 -43.3 31.5 0 0Z" fill="#0d9b73"/><path d="M0 0C-15.3 -32.8 -42.1 -50.7 -71.5 -61.1C-56.6 -33.6 -34.8 -10.0 0 0Z" fill="#0d9b73"/><path d="M0 0C-37.7 -36.2 -83.0 -53.0 -128.0 -60.7C-93.6 -30.8 -51.9 -6.3 0 0Z" fill="#72bd8c"/><path d="M0 0C-11.0 -41.8 -35.5 -73.4 -63.7 -98.5C-52.4 -62.5 -33.6 -27.1 0 0Z" fill="#72bd8c"/><path d="M0 0C44.9 -18.5 77.5 -49.9 102.5 -84.2C64.0 -66.3 26.8 -40.5 0 0Z" fill="#72bd8c"/><path d="M0 0C31.8 -45.0 33.6 -93.5 23.1 -139.7C-1.7 -99.3 -15.6 -52.8 0 0Z" fill="#72bd8c"/><path d="M0 0C43.9 9.0 86.5 6.7 125.4 0.0C86.5 -6.7 43.9 -9.0 0 0Z" fill="#72bd8c"/><path d="M0 0C-49.6 2.6 -88.0 25.9 -118.9 55.9C-76.1 51.2 -33.6 36.5 0 0Z" fill="#72bd8c"/><path d="M0 0C-33.0 29.3 -53.6 65.4 -67.6 101.5C-39.7 74.7 -14.3 41.8 0 0Z" fill="#72bd8c"/><path d="M0 0C15.5 48.6 47.3 82.9 83.3 108.8C67.7 67.2 42.9 27.6 0 0Z" fill="#72bd8c"/><path d="M0 0C-9.6 39.6 -7.0 78.1 0.4 113.1C7.6 78.0 9.9 39.6 0 0Z" fill="#72bd8c"/></g></svg>
<div class="abs" style="left:1310px;top:380px;width:396px;height:52px;background:#447aef"></div>
<div class="abs" style="left:1330px;top:390px;width:88px;height:32px;border-radius:6.5px;background:#a5bef7;box-shadow:0 0.5px 1px rgba(20,40,120,0.35)"></div>
<div class="abs" style="left:1441.5px;top:390px;width:92.5px;height:32px;border-radius:6.5px;background:#a5bef7;box-shadow:0 0.5px 1px rgba(20,40,120,0.35)"></div>
<div class="abs" style="left:1558px;top:390px;width:88px;height:32px;border-radius:6.5px;background:#a5bef7;box-shadow:0 0.5px 1px rgba(20,40,120,0.35)"></div>
<svg style="left:1396px;top:399px" width="18" height="14" viewBox="-2 -3 18 14"><path d="M1.2 1L6.6 6.6L12 1" fill="none" stroke="#364b90" stroke-width="2.1" stroke-linecap="round" stroke-linejoin="round"/></svg>
<svg style="left:1512.4px;top:399px" width="18" height="14" viewBox="-2 -3 18 14"><path d="M1.2 1L6.6 6.6L12 1" fill="none" stroke="#364b90" stroke-width="2.1" stroke-linecap="round" stroke-linejoin="round"/></svg>
<svg style="left:1624px;top:399px" width="18" height="14" viewBox="-2 -3 18 14"><path d="M1.2 1L6.6 6.6L12 1" fill="none" stroke="#364b90" stroke-width="2.1" stroke-linecap="round" stroke-linejoin="round"/></svg>
<svg style="left:1343px;top:391px" width="32" height="30" viewBox="1343 391 32 30" opacity="0.8">
      <path d="M1346.6 404.6L1358 394.6L1371.6 404.6L1369.4 405.6V414.4L1357 418.4L1348 414.6V405.4Z" fill="#d8dcec" stroke="#6f7894" stroke-width="1.3" stroke-linejoin="round"/>
      <path d="M1345.6 404.8L1358 394L1372.4 404.6L1357.4 408.4Z" fill="#aab4d6" stroke="#6f7894" stroke-width="1.2" stroke-linejoin="round"/>
      <path d="M1357 408.6V418.2" stroke="#6f7894" stroke-width="1"/>
      <path d="M1357.6 409V417.8L1369 414.2V405.8Z" fill="#c7cde3"/>
      <rect x="1355.4" y="392.6" width="3.2" height="5.6" fill="#c5b9c8" stroke="#6f7894" stroke-width="0.9"/>
      <rect x="1350.4" y="408.4" width="3" height="3.6" fill="#6c7fb8"/><rect x="1360.6" y="409.4" width="2.8" height="3.4" fill="#6c7fb8"/><rect x="1365" y="408" width="2.6" height="3.2" fill="#6c7fb8"/>
    </svg>
<svg style="left:1456px;top:391px" width="32" height="30" viewBox="1456 391 32 30" opacity="0.8">
      <path d="M1459.6 403.6L1470.6 393.6L1483.6 404.4V414.2L1470.6 418.6L1460.6 414.4Z" fill="#c9cfe2" stroke="#6a7390" stroke-width="1.3" stroke-linejoin="round"/>
      <path d="M1459.6 403.6L1470.6 393.6L1472.2 408.4L1460.6 404.6Z" fill="#8d99c2"/>
      <path d="M1470.6 393.6L1483.6 404.4V414.2L1471.6 418.2L1472.2 406Z" fill="#dfe3f1" stroke="#6a7390" stroke-width="0.8"/>
      <path d="M1473 416L1482.6 405M1473 412L1480 404M1473 408L1477 403M1476 417L1483 409M1480 415.6L1483.4 412" stroke="#8a93b3" stroke-width="0.8"/>
      <path d="M1460.8 405V414.2L1471.4 418V408.6Z" fill="#a9b3d4" stroke="#6a7390" stroke-width="0.8"/>
      <rect x="1464" y="409.6" width="3.6" height="4.6" fill="#d5daec"/>
    </svg>
<svg style="left:1570px;top:390px" width="38" height="32" viewBox="1570 390 38 32" opacity="0.9">
      <path d="M1597.6 401.4Q1604.6 396.4 1604 403.4Q1603.4 409.6 1597.4 412.4" fill="none" stroke="#5d689a" stroke-width="1.7"/>
      <path d="M1579 408Q1575.4 404.2 1572.8 402.6Q1574.2 409.6 1580.4 414Z" fill="#c9cff6" stroke="#5d689a" stroke-width="1.3" stroke-linejoin="round"/>
      <ellipse cx="1588.4" cy="409.6" rx="11" ry="10.2" fill="#bcc5f6" stroke="#5d689a" stroke-width="1.4"/>
      <ellipse cx="1585" cy="412.6" rx="6" ry="4.6" fill="#dfe3fc" opacity="0.75"/>
      <path d="M1579.4 403.6Q1588.4 407.4 1597.4 403.6" fill="none" stroke="#5d689a" stroke-width="1.1"/>
      <path d="M1580.6 402.8Q1588.4 396 1596.2 402.8" fill="#cdd3f8" stroke="#5d689a" stroke-width="1.1"/>
      <circle cx="1588.4" cy="397" r="1.9" fill="#d8dcfa" stroke="#5d689a" stroke-width="1"/>
      <path d="M1588.4 392.4V395" stroke="#5d689a" stroke-width="1.2"/>
    </svg>
<div class="abs" style="left:1492px;top:438px;width:4px;height:4px;background:#9b9b9b"></div>
<div class="abs" style="left:1502px;top:438px;width:4px;height:4px;background:#9b9b9b"></div>
<div class="abs" style="left:1512px;top:438px;width:4px;height:4px;background:#9b9b9b"></div>
<div class="abs" style="left:1308px;top:446px;width:400px;height:982px;background:#fff"></div>
<div class="abs" style="left:1308px;top:446px;width:2px;height:982px;background:#bdbdbd"></div>
<div class="abs" style="left:1308px;top:446px;width:398px;height:2px;background:#c2c2c2"></div>
<div class="abs" style="left:1308px;top:1426px;width:400px;height:2px;background:#bdbdbd"></div>
<div class="abs" style="left:1706px;top:496px;width:2px;height:932px;background:#b4b4b4"></div>
<div class="abs" style="left:1706px;top:446px;width:2px;height:50px;background:#ececec"></div>
<div class="abs" style="left:1310px;top:448px;width:396px;height:46px;background:#efefef"></div>
<div class="abs" style="left:1310px;top:494px;width:396px;height:2px;background:#c6c6c6"></div>
<div class="abs" style="left:1578px;top:454px;width:2px;height:34px;background:#d6d6d6"></div>
<div class="abs" style="left:1704px;top:454px;width:2px;height:34px;background:#d6d6d6"></div>
<div class="abs" style="left:1676px;top:496px;width:30px;height:900px;background:#fafafa;border-left:2px solid #e8e8e8"></div>
<div class="abs" style="left:1704px;top:496px;width:2px;height:900px;background:#eeeeee"></div>
<div class="abs" style="left:1684px;top:502px;width:16px;height:467px;border-radius:8px;background:#c1c1c1"></div>
<div class="abs" style="left:1310px;top:1396px;width:366px;height:30px;background:#fafafa;border-top:2px solid #e8e8e8"></div>
<div class="abs" style="left:1316px;top:1404px;width:271px;height:16px;border-radius:8px;background:#c1c1c1"></div>
<span class="t" style="left:1314.10px;top:452px;letter-spacing:0.290px;">Data</span>
<svg style="left:1325px;top:507px" width="18" height="15" ><use href="#tri" width="18" height="15"/></svg>
<svg style="left:1357px;top:583px" width="18" height="15" ><use href="#tri" width="18" height="15"/></svg>
<div class="abs" style="left:0;top:0;width:1577px;height:1396px;overflow:hidden">
<span class="t" style="left:1348.96px;top:494px;letter-spacing:0.917px;">Attached</span>
<span class="t" style="left:1448.30px;top:494px;letter-spacing:0.838px;">Records:</span>
<span class="t" style="left:1379.50px;top:532px;letter-spacing:0.600px;">Record</span>
<span class="t" style="left:1459.70px;top:532px;letter-spacing:0.615px;">Name/Field</span>
<span class="t" style="left:1379.50px;top:570px;letter-spacing:0.577px;">Plant</span>
<span class="t" style="left:1438.90px;top:570px;letter-spacing:0.680px;">Record</span>
<span class="t" style="left:1411.57px;top:608px;letter-spacing:0.083px;">ID</span>
<span class="t" style="left:1412.06px;top:646px;letter-spacing:0.864px;">Quantity</span>
<span class="t" style="left:1411.80px;top:684px;letter-spacing:0.779px;">Latin</span>
<span class="t" style="left:1469.00px;top:684px;letter-spacing:0.765px;">Name</span>
<span class="t" style="left:1411.98px;top:722px;letter-spacing:0.339px;">Common</span>
<span class="t" style="left:1510.70px;top:722px;letter-spacing:0.865px;">Name</span>
<span class="t" style="left:1411.80px;top:760px;letter-spacing:0.340px;">Plantlist</span>
<span class="t" style="left:1501.30px;top:760px;letter-spacing:0.765px;">Name</span>
<span class="t" style="left:1411.98px;top:798px;letter-spacing:0.740px;">Category</span>
<span class="t" style="left:1412.10px;top:836px;letter-spacing:0.653px;">Spread</span>
<span class="t" style="left:1411.80px;top:874px;letter-spacing:0.954px;">Height</span>
<span class="t" style="left:1412.10px;top:912px;letter-spacing:0.734px;">Spacing</span>
<span class="t" style="left:1412.10px;top:950px;letter-spacing:0.767px;">Scheduled</span>
<span class="t" style="left:1528.70px;top:950px;letter-spacing:0.493px;">Size</span>
<span class="t" style="left:1412.10px;top:988px;letter-spacing:-0.127px;">SKU</span>
<span class="t" style="left:1411.80px;top:1026px;letter-spacing:0.764px;">Price</span>
<span class="t" style="left:1411.80px;top:1064px;letter-spacing:0.651px;">Extended</span>
<span class="t" style="left:1515.70px;top:1064px;letter-spacing:0.839px;">Price</span>
<span class="t" style="left:1411.80px;top:1102px;letter-spacing:1.029px;">Notes</span>
<span class="t" style="left:1411.98px;top:1140px;letter-spacing:0.199px;">Class</span>
<span class="t" style="left:1474.88px;top:1140px;letter-spacing:0.834px;">Code</span>
<span class="t" style="left:1411.80px;top:1178px;letter-spacing:0.728px;">Landscape</span>
<span class="t" style="left:1531.50px;top:1178px;letter-spacing:0.975px;">Use</span>
<span class="t" style="left:1411.99px;top:1216px;letter-spacing:0.903px;">Growth</span>
<span class="t" style="left:1493.50px;top:1216px;letter-spacing:1.027px;">Habit</span>
<span class="t" style="left:1411.80px;top:1254px;letter-spacing:0.820px;">Mature</span>
<span class="t" style="left:1491.40px;top:1254px;letter-spacing:0.954px;">Height</span>
<span class="t" style="left:1411.80px;top:1292px;letter-spacing:0.820px;">Mature</span>
<span class="t" style="left:1491.70px;top:1292px;letter-spacing:0.653px;">Spread</span>
<span class="t" style="left:1411.80px;top:1330px;letter-spacing:0.631px;">Flower</span>
<span class="t" style="left:1487.28px;top:1330px;letter-spacing:0.750px;">Characteristics</span>
<span class="t" style="left:1411.80px;top:1368px;letter-spacing:0.332px;">Floral</span>
<span class="t" style="left:1476.08px;top:1368px;letter-spacing:0.826px;">Color</span>
</div>
<div class="abs" style="left:0;top:0;width:1676px;height:1396px;overflow:hidden">
<span class="t" style="left:1587.30px;top:532px;letter-spacing:0.233px;">Value</span>
<span class="t" style="left:1587.36px;top:608px;letter-spacing:0.495px;">Ateq</span>
<span class="t" style="left:1586.54px;top:646px;letter-spacing:0.369px;">0</span>
<span class="t" style="left:1587.36px;top:684px;letter-spacing:-0.243px;">Agave</span>
<span class="t" style="left:1656.97px;top:684px;letter-spacing:0.750px;">tequilana</span>
<span class="t" style="left:1587.30px;top:722px;letter-spacing:0.564px;">Weber's</span>
<span class="t" style="left:1587.36px;top:760px;letter-spacing:-0.243px;">Agave</span>
<span class="t" style="left:1656.97px;top:760px;letter-spacing:0.750px;">tequilana</span>
<span class="t" style="left:1586.28px;top:798px;letter-spacing:0.604px;">Cactus/</span>
<span class="t" style="left:1666.00px;top:798px;letter-spacing:0.750px;">Succulent</span>
<span class="t" style="left:1586.90px;top:836px;letter-spacing:1.685px;">4'6"</span>
<span class="t" style="left:1586.56px;top:874px;letter-spacing:1.596px;">3'0"</span>
<span class="t" style="left:1586.29px;top:912px;letter-spacing:1.452px;">2'0"</span>
<span class="t" style="left:1586.54px;top:1026px;letter-spacing:0.369px;">0</span>
<span class="t" style="left:1586.54px;top:1064px;letter-spacing:0.369px;">0</span>
<span class="t" style="left:1585.60px;top:1178px;letter-spacing:0.723px;">Barrier,</span>
<span class="t" style="left:1667.58px;top:1178px;letter-spacing:0.750px;">Container</span>
<span class="t" style="left:1586.56px;top:1254px;letter-spacing:-0.045px;">3</span>
<span class="t" style="left:1606.22px;top:1254px;letter-spacing:1.427px;transform:scaleX(1.321);transform-origin:0.98px 50%;">-</span>
<span class="t" style="left:1623.52px;top:1254px;letter-spacing:-0.445px;">5</span>
<span class="t" style="left:1643.39px;top:1254px;letter-spacing:1.888px;">ft.</span>
<span class="t" style="left:1586.52px;top:1292px;letter-spacing:-0.445px;">5</span>
<span class="t" style="left:1605.72px;top:1292px;letter-spacing:1.927px;transform:scaleX(1.414);transform-origin:0.98px 50%;">-</span>
<span class="t" style="left:1621.82px;top:1292px;letter-spacing:-0.249px;">10</span>
<span class="t" style="left:1654.19px;top:1292px;letter-spacing:1.838px;">ft.</span>
<span class="t" style="left:1586.92px;top:1368px;letter-spacing:0.147px;">Yellow</span>
</div>

<div class="abs" style="left:1228px;top:1436px;width:94px;height:32px;background:#fff;border-radius:6px;box-shadow:0 0 0 1px #d0d0d0, 0 1.5px 1px rgba(0,0,0,0.18)"></div>
<div class="abs" style="left:1356px;top:1436px;width:300px;height:32px;background:#fff;border-radius:6px;box-shadow:0 0 0 1px #d0d0d0, 0 1.5px 1px rgba(0,0,0,0.18)"></div>
<span class="t" style="left:821.82px;top:1433px;letter-spacing:0.897px;word-spacing:-1.3px;">1 Item</span>
<span class="t" style="left:1242.00px;top:1433px;letter-spacing:0.681px;">Select</span>
<span class="t" style="left:1369.00px;top:1433px;letter-spacing:1.309px;">Find</span>
<span class="t" style="left:1421.63px;top:1433px;letter-spacing:1.175px;">in</span>
<span class="t" style="left:1445.50px;top:1433px;letter-spacing:0.589px;">Resource</span>
<span class="t" style="left:1549.50px;top:1433px;letter-spacing:0.754px;">Manager</span>
<div class="abs" style="left:1697px;top:1464px;width:4px;height:4px;background:#9b9b9b"></div>
<div class="abs" style="left:1708px;top:1464px;width:4px;height:4px;background:#9b9b9b"></div>
<div class="abs" style="left:1708px;top:1454px;width:4px;height:4px;background:#9b9b9b"></div>
<div class="abs" style="left:0;top:1476px;width:1720px;height:4px;background:#d9d9d9;border-top:1px solid #a9a9a9"></div>
<div class="abs" style="left:1718px;top:0;width:2px;height:1476px;background:#d8d8d2;border-left:1px solid #b5b5ae"></div>
<div class="abs" style="left:1718.6px;top:7px;width:2px;height:13px;background:#2b2b2b;border-radius:2px 0 0 2px"></div>
<div class="abs" style="left:1718.6px;top:100px;width:2px;height:38px;background:#2b2b2b;border-radius:2px 0 0 2px"></div>
<div class="abs" style="left:1718.6px;top:136px;width:2px;height:38px;background:#2b2b2b;border-radius:2px 0 0 2px"></div>
<svg style="left:0;top:1470px" width="1720" height="10" viewBox="0 1470 1720 10">
      <path d="M1706 1476.5Q1718.5 1476.5 1718.5 1464V1480H1706Z" fill="#d8d8d2"/>
      <path d="M1706 1476.5Q1718.5 1476.5 1718.5 1464" fill="none" stroke="#b0b0aa" stroke-width="1"/>
      <polygon points="676,1480 724,1477 724,1478 692,1480" fill="#4d7a4a"/>
      <polygon points="1028,1480 1078,1476.6 1079,1478.2 1052,1480" fill="#1f5a26"/>
      <path d="M0 1480V1478Q4 1477.5 6 1480Z" fill="#3f6f3c"/>
      <text x="49" y="1498.2" font-family="Liberation Sans" font-weight="700" font-size="30" fill="#000" letter-spacing="2.8">2.500</text>
    </svg>
</div></body></html>
